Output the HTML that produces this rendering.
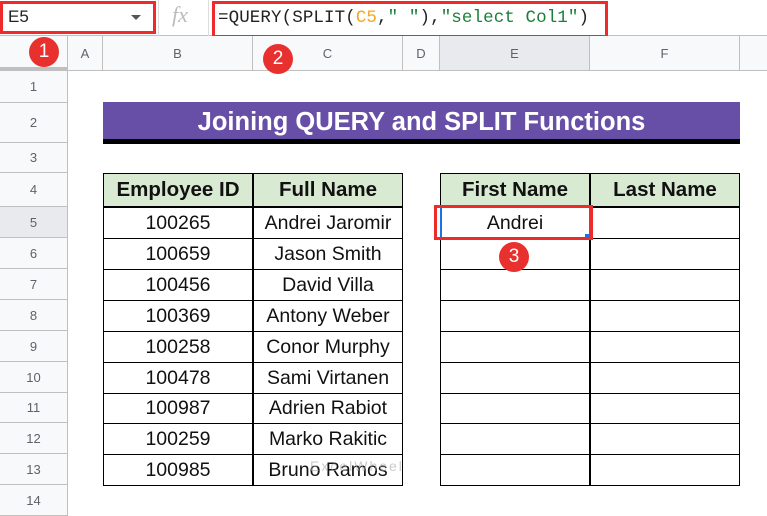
<!DOCTYPE html>
<html><head><style>
body{margin:0;width:767px;height:509px;overflow:hidden;background:#fff;font-family:"Liberation Sans",Arial,sans-serif;position:relative}
.a{position:absolute;box-sizing:border-box}
.rh{position:absolute;left:0;width:68px;border-bottom:1px solid #c0c0c0;border-right:1px solid #c0c0c0;background:#f8f9fa;color:#5f6368;font-size:13px;display:flex;align-items:center;justify-content:center;box-sizing:border-box}
.ch{position:absolute;top:36px;height:35px;border-right:1px solid #c0c0c0;border-bottom:1px solid #c0c0c0;background:#f8f9fa;color:#5f6368;font-size:13px;display:flex;align-items:center;justify-content:center;box-sizing:border-box}
.c{position:absolute;border:1px solid #000;display:flex;align-items:center;justify-content:center;font-size:19.5px;color:#111;box-sizing:border-box;margin:-1px 0 0 -1px;white-space:nowrap}
.h{background:#d9ead3;font-weight:bold;font-size:20.5px}
.circ{position:absolute;width:30px;height:30px;border-radius:50%;background:#e8312f;color:#fff;font-size:19px;display:flex;align-items:center;justify-content:center}
.red{position:absolute;border:3px solid #ee2a2a;box-sizing:border-box}
</style></head><body>
<div class="a" style="left:0;top:0;width:767px;height:36px;border-bottom:1px solid #c0c0c0"></div>
<div class="a" style="left:8px;top:7px;font-size:17px;color:#222">E5</div>
<div class="a" style="left:131px;top:15px;width:0;height:0;border-left:5px solid transparent;border-right:5px solid transparent;border-top:5px solid #555"></div>
<div class="a" style="left:158px;top:0;width:1px;height:36px;background:#ddd"></div>
<div class="a" style="left:172px;top:2px;font-family:'Liberation Serif',serif;font-style:italic;font-size:22px;color:#bbb">fx</div>
<div class="a" style="left:208px;top:0;width:1px;height:36px;background:#ddd"></div>
<div class="a" style="left:218px;top:8px;font-family:'Liberation Mono',monospace;font-size:17.5px;color:#222;letter-spacing:0.1px">=QUERY(SPLIT(<span style="color:#f5a623">C5</span>,<span style="color:#188038">" "</span>),<span style="color:#188038">"select Col1"</span>)</div>
<div class="red" style="left:0;top:1px;width:156px;height:33px"></div>
<div class="red" style="left:212px;top:1px;width:396px;height:37px"></div>

<div class="a" style="left:0;top:36px;width:68px;height:35px;background:#f8f9fa;border-right:1px solid #c0c0c0;border-bottom:4px solid #c0c0c0"></div>
<div class="ch" style="left:68px;width:35px">A</div>
<div class="ch" style="left:103px;width:150px">B</div>
<div class="ch" style="left:253px;width:150px">C</div>
<div class="ch" style="left:403px;width:37px">D</div>
<div class="ch" style="left:440px;width:150px;background:#e8eaed">E</div>
<div class="ch" style="left:590px;width:150px">F</div>
<div class="ch" style="left:740px;width:27px;border-right:none"></div>

<div class="rh" style="top:71px;height:32px">1</div>
<div class="rh" style="top:103px;height:40px">2</div>
<div class="rh" style="top:143px;height:30px">3</div>
<div class="rh" style="top:173px;height:34px">4</div>
<div class="rh" style="top:207px;height:31px;background:#e8eaed">5</div>
<div class="rh" style="top:238px;height:31px">6</div>
<div class="rh" style="top:269px;height:31px">7</div>
<div class="rh" style="top:300px;height:31px">8</div>
<div class="rh" style="top:331px;height:31px">9</div>
<div class="rh" style="top:362px;height:31px">10</div>
<div class="rh" style="top:393px;height:30px">11</div>
<div class="rh" style="top:423px;height:31px">12</div>
<div class="rh" style="top:454px;height:31px">13</div>
<div class="rh" style="top:485px;height:31px">14</div>

<div class="a" style="left:103px;top:102px;width:637px;height:37px;background:#674ea7;color:#fff;font-weight:bold;font-size:25.5px;display:flex;align-items:center;justify-content:center;padding-top:3px">Joining QUERY and SPLIT Functions</div>
<div class="a" style="left:103px;top:139px;width:637px;height:5px;background:#000"></div>

<div class="c h" style="left:104px;top:174px;width:150px;height:34px">Employee ID</div>
<div class="c h" style="left:254px;top:174px;width:150px;height:34px">Full Name</div>
<div class="c h" style="left:441px;top:174px;width:150px;height:34px">First Name</div>
<div class="c h" style="left:591px;top:174px;width:150px;height:34px">Last Name</div>

<div id="rows"></div>
<script>
var d=[["100265","Andrei Jaromir"],["100659","Jason Smith"],["100456","David Villa"],["100369","Antony Weber"],["100258","Conor Murphy"],["100478","Sami Virtanen"],["100987","Adrien Rabiot"],["100259","Marko Rakitic"],["100985","Bruno Ramos"]];
var tops=[208,239,270,301,332,363,394,424,455,486];var h="";
for(var i=0;i<9;i++){var t=tops[i],hh=tops[i+1]-t+1;
h+='<div class="c" style="left:104px;top:'+t+'px;width:150px;height:'+hh+'px">'+d[i][0]+'</div>';
h+='<div class="c" style="left:254px;top:'+t+'px;width:150px;height:'+hh+'px">'+d[i][1]+'</div>';
h+='<div class="c" style="left:441px;top:'+t+'px;width:150px;height:'+hh+'px">'+(i==0?'Andrei':'')+'</div>';
h+='<div class="c" style="left:591px;top:'+t+'px;width:150px;height:'+hh+'px"></div>';}
document.getElementById("rows").innerHTML=h;
</script>
<div class="a" style="left:440px;top:206px;width:151px;height:33px;border:2px solid #1a73e8"></div>
<div class="a" style="left:585px;top:234px;width:5px;height:5px;background:#1a73e8"></div>
<div class="red" style="left:434px;top:205px;width:159px;height:35px"></div>
<div class="a" style="left:310px;top:458px;font-size:14px;color:#aaa;letter-spacing:2px;opacity:.6">ExcelWheel</div>

<div class="circ" style="left:29px;top:37px">1</div>
<div class="circ" style="left:263px;top:44px">2</div>
<div class="circ" style="left:499px;top:242px">3</div>
</body></html>
